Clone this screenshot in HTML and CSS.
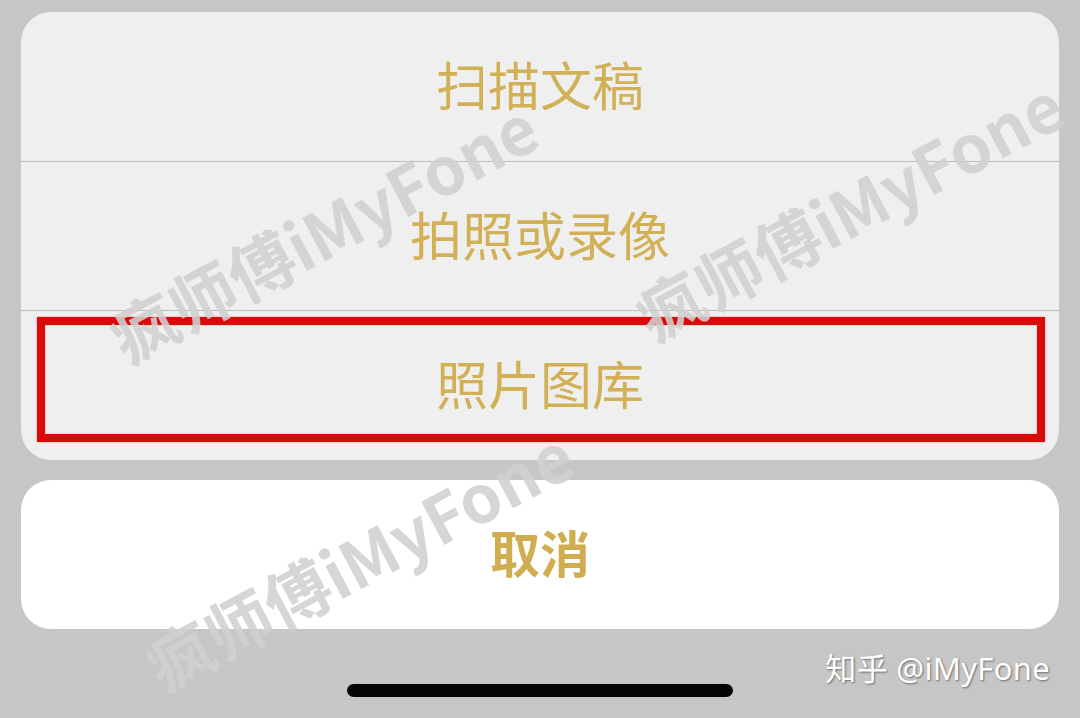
FILE: index.html
```html
<!DOCTYPE html>
<html lang="zh-CN">
<head>
    <meta charset="UTF-8">
    <title>照片图库</title>
    <link rel="stylesheet" href="styles.css">
</head>
<body>
<div class="page">
    <ul class="sheet">
        <li>扫描文稿</li>
        <li>拍照或录像</li>
        <li class="marked">照片图库<span class="mark"></span></li>
    </ul>
    <div class="cancel">取消</div>
    <div class="footer">
        <span class="home-bar"></span>
        <span class="credit">知乎 @iMyFone</span>
    </div>

    <!-- 水印 -->
    <span class="wm wm1">疯师傅iMyFone</span>
    <span class="wm wm2">疯师傅iMyFone</span>
    <span class="wm wm3">疯师傅iMyFone</span>
</div>
</body>
</html>
```

FILE: styles.css
```css
*{
    margin: 0;
    padding: 0;
}
html, body{
    width: 1080px;
    height: 718px;
    overflow: hidden;
}
body{
    background: #c6c6c6;
    font-family: "Noto Sans CJK SC", "Noto Sans", sans-serif;
}
.page{
    position: relative;
    height: 718px;
    padding: 12px 21px 0;
    box-sizing: border-box;
    display: flex;
    flex-direction: column;
    overflow: hidden;
}
.sheet{
    list-style: none;
    background: #efefef;
    border-radius: 30px;
    overflow: hidden;
    display: flex;
    flex-direction: column;
}
.sheet>li{
    height: 149px;
    box-sizing: border-box;
    padding-bottom: 6px;
    display: flex;
    align-items: center;
    justify-content: center;
    font-size: 52px;
    color: #d1b056;
    border-top: 1px solid #bcbcbc;
    position: relative;
}
.sheet>li:first-child{
    border-top: none;
}
.sheet>li.marked{
    height: 150px;
}
.mark{
    position: absolute;
    left: 16px;
    right: 14px;
    top: 6px;
    bottom: 18px;
    border: 8px solid #da0a0a;
    box-shadow: 0 0 2px rgba(230,0,0,0.4), inset 0 0 2px rgba(230,0,0,0.4);
}
.cancel{
    margin-top: 20px;
    height: 149px;
    box-sizing: border-box;
    padding-bottom: 8px;
    background: #fff;
    border-radius: 30px;
    display: flex;
    align-items: center;
    justify-content: center;
    font-size: 50px;
    font-weight: bold;
    color: #d0ae4f;
}
.footer{
    flex: 1;
    position: relative;
    display: flex;
    justify-content: center;
}
.home-bar{
    margin-top: 55px;
    width: 386px;
    height: 13px;
    border-radius: 7px;
    background: #050505;
}
.credit{
    position: absolute;
    right: 9px;
    top: 15px;
    font-family: "Noto Sans", "Noto Sans CJK SC", sans-serif;
    font-size: 31px;
    color: #fff;
    text-shadow: 1px 1px 2px rgba(0,0,0,0.45);
    white-space: nowrap;
    letter-spacing: 0.3px;
}
.wm{
    position: absolute;
    white-space: nowrap;
    font-size: 66px;
    font-weight: bold;
    color: rgba(208,208,208,0.88);
    transform: translate(-50%, -50%) rotate(-28deg);
    pointer-events: none;
    line-height: 1;
}
.wm1{
    left: 322px;
    top: 230px;
}
.wm2{
    left: 848px;
    top: 208px;
}
.wm3{
    left: 358px;
    top: 558px;
}
```
